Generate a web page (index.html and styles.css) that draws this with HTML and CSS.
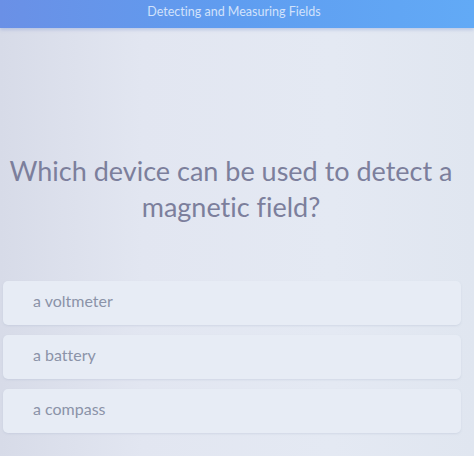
FILE: index.html
```html
<!DOCTYPE html>
<html>
<head>
<meta charset="utf-8">
<link rel="stylesheet" href="styles.css">
</head>
<body>
<div class="screen">
  <header class="topbar">Detecting and Measuring Fields</header>
  <main class="content">
    <h1 class="question">Which device can be used to detect a magnetic field?</h1>
    <ul class="options">
      <li class="option">a voltmeter</li>
      <li class="option">a battery</li>
      <li class="option">a compass</li>
    </ul>
  </main>
</div>
</body>
</html>
```
FILE: styles.css
```css
html, body {
  margin: 0;
  padding: 0;
}
body {
  width: 474px;
  height: 456px;
  overflow: hidden;
  font-family: Lato, "Open Sans", sans-serif;
  font-variant-ligatures: none;
  background: linear-gradient(90deg, #d7dbe8 0%, #e2e6f1 30%, #e4e9f3 70%, #e0e6f0 100%);
}
.screen {
  display: flex;
  flex-direction: column;
  height: 456px;
}
.topbar {
  height: 28px;
  line-height: 24px;
  text-align: center;
  font-size: 12.5px;
  color: #d2e2fb;
  background: linear-gradient(90deg, #6a90e6 0%, #5f9df0 50%, #62aaf6 100%);
  box-shadow: 0 2px 3px rgba(120, 150, 210, 0.35);
  padding-right: 6px;
}
.content {
  display: flex;
  flex-direction: column;
  padding: 0 13px 0 3px;
}
.question {
  margin: 125px -13px 0 -3px;
  font-weight: 400;
  font-size: 27px;
  line-height: 36px;
  text-align: center;
  color: #7c7f9c;
  padding: 0 12px 0 0;
}
.options {
  list-style: none;
  margin: 56px 0 0 0;
  padding: 0;
  display: flex;
  flex-direction: column;
  gap: 10px;
}
.option {
  height: 44px;
  line-height: 40px;
  padding-left: 30px;
  font-size: 16px;
  color: #8b93a8;
  background: #e7ecf5;
  border-radius: 5px;
  box-shadow: 0 1px 2px rgba(160, 170, 195, 0.25);
}
```
